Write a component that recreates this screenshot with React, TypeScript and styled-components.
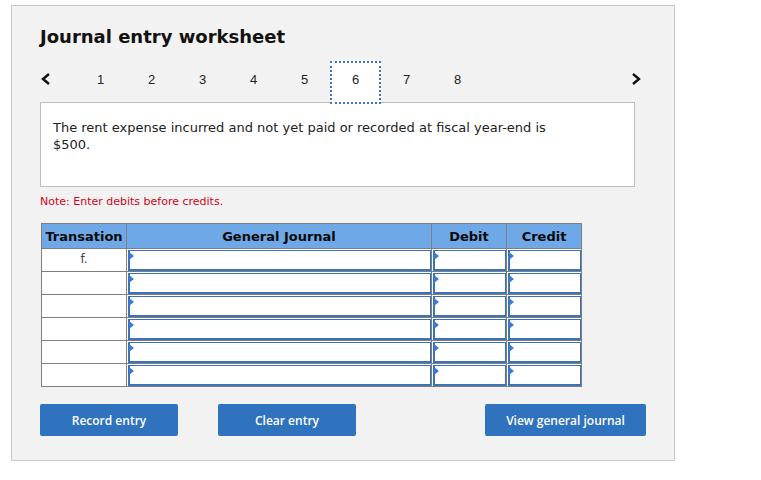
import styled, { createGlobalStyle } from 'styled-components';

const GlobalStyle = createGlobalStyle`
  body {
    margin: 0;
    background: #ffffff;
    font-family: 'DejaVu Sans', Verdana, sans-serif;
    color: #1a1a1a;
  }
`;

const Panel = styled.div`
  box-sizing: border-box;
  width: 664px;
  margin: 5px 0 0 11px;
  padding: 19px 0 24px 28px;
  background: #f2f2f2;
  border: 1px solid #c8c8c8;
`;

const Title = styled.h1`
  margin: 0;
  font-size: 18px;
  line-height: 24px;
  font-weight: bold;
  color: #111;
`;

const Nav = styled.div`
  display: flex;
  align-items: flex-start;
  width: 595px;
  height: 41px;
  margin-top: 12px;
`;

const Chevron = styled.button<{ $right?: boolean }>`
  display: flex;
  align-items: center;
  width: ${(p) => (p.$right ? '20px' : '35px')};
  height: 36px;
  padding: 0;
  border: 0;
  background: transparent;
  justify-content: ${(p) => (p.$right ? 'center' : 'flex-start')};
  margin-left: ${(p) => (p.$right ? 'auto' : '0')};
  margin-right: ${(p) => (p.$right ? '-11px' : '0')};
`;

const Step = styled.div<{ $active?: boolean }>`
  box-sizing: border-box;
  width: 51px;
  height: 43px;
  line-height: 34px;
  text-align: center;
  font-family: 'Liberation Sans', Arial, sans-serif;
  font-size: 13px;
  color: #222;
  border: 2px dotted ${(p) => (p.$active ? '#3a74c4' : 'transparent')};
  background: ${(p) => (p.$active ? '#ffffff' : 'transparent')};
  position: relative;
  z-index: 1;
`;

const Prompt = styled.div`
  box-sizing: border-box;
  width: 595px;
  height: 85px;
  padding: 16px 12px 0 12px;
  background: #fff;
  border: 1px solid #bdbdbd;
  font-size: 13px;
  line-height: 17px;
  color: #222;
`;

const Note = styled.p`
  margin: 8px 0 14px;
  font-size: 11px;
  line-height: 14px;
  color: #d0021b;
`;

const Table = styled.table`
  border-collapse: collapse;
  margin-left: 1px;
  table-layout: fixed;
  width: 536px;
`;

const Head = styled.th<{ $w: number }>`
  width: ${(p) => p.$w}px;
  height: 24px;
  padding: 0;
  background: #6ea8e6;
  border: 1px solid #7f7f7f;
  font-size: 13px;
  font-weight: bold;
  color: #0a0a0a;
  text-align: center;
`;

const Cell = styled.td`
  height: 21px;
  padding: 1px 0 0 1px;
  background: #fff;
  border: 1px solid #7f7f7f;
  vertical-align: top;
`;

const Label = styled.td`
  height: 21px;
  padding: 0;
  background: #fff;
  border: 1px solid #7f7f7f;
  vertical-align: top;
  text-align: center;
  font-size: 12px;
  line-height: 20px;
  color: #444;
`;

const Field = styled.div`
  position: relative;
  box-sizing: border-box;
  height: 21px;
  border: 1px solid #3b73b9;
  border-width: 1px 1px 2px 2px;
  background: #fff;

  &::before {
    content: '';
    position: absolute;
    left: -1px;
    top: 1px;
    border-left: 5px solid #3a7bd5;
    border-top: 4px solid transparent;
    border-bottom: 4px solid transparent;
  }
`;

const Actions = styled.div`
  display: flex;
  gap: 40px;
  width: 606px;
  margin-top: 17px;
`;

const Action = styled.button<{ $w: number; $push?: boolean }>`
  width: ${(p) => p.$w}px;
  height: 32px;
  margin-left: ${(p) => (p.$push ? 'auto' : '0')};
  border: 0;
  border-radius: 2px;
  background: #2f72be;
  color: #fff;
  font-family: 'Open Sans', 'Noto Sans', sans-serif;
  font-size: 12px;
  font-weight: 600;
`;

function Arrow({ right }: { right?: boolean }) {
  return (
    <svg width="12" height="14" viewBox="0 0 12 14">
      <polyline
        points={right ? '3,2 9,7 3,12' : '9,2 3,7 9,12'}
        fill="none"
        stroke="#111"
        strokeWidth="2.4"
      />
    </svg>
  );
}

const rows = ['f.', '', '', '', '', ''];

function App() {
  return (
    <>
      <GlobalStyle />
      <Panel>
        <Title>Journal entry worksheet</Title>
        <Nav>
          <Chevron type="button">
            <Arrow />
          </Chevron>
          {[1, 2, 3, 4, 5, 6, 7, 8].map((n) => (
            <Step key={n} $active={n === 6}>
              {n}
            </Step>
          ))}
          <Chevron type="button" $right>
            <Arrow right />
          </Chevron>
        </Nav>
        <Prompt>
          The rent expense incurred and not yet paid or recorded at fiscal year-end is
          <br />
          $500.
        </Prompt>
        <Note>Note: Enter debits before credits.</Note>
        <Table>
          <thead>
            <tr>
              <Head $w={84}>Transation</Head>
              <Head $w={304}>General Journal</Head>
              <Head $w={74}>Debit</Head>
              <Head $w={74}>Credit</Head>
            </tr>
          </thead>
          <tbody>
            {rows.map((t, i) => (
              <tr key={i}>
                <Label>{t}</Label>
                <Cell>
                  <Field />
                </Cell>
                <Cell>
                  <Field />
                </Cell>
                <Cell>
                  <Field />
                </Cell>
              </tr>
            ))}
          </tbody>
        </Table>
        <Actions>
          <Action type="button" $w={138}>
            Record entry
          </Action>
          <Action type="button" $w={138}>
            Clear entry
          </Action>
          <Action type="button" $w={161} $push>
            View general journal
          </Action>
        </Actions>
      </Panel>
    </>
  );
}

export default App;
